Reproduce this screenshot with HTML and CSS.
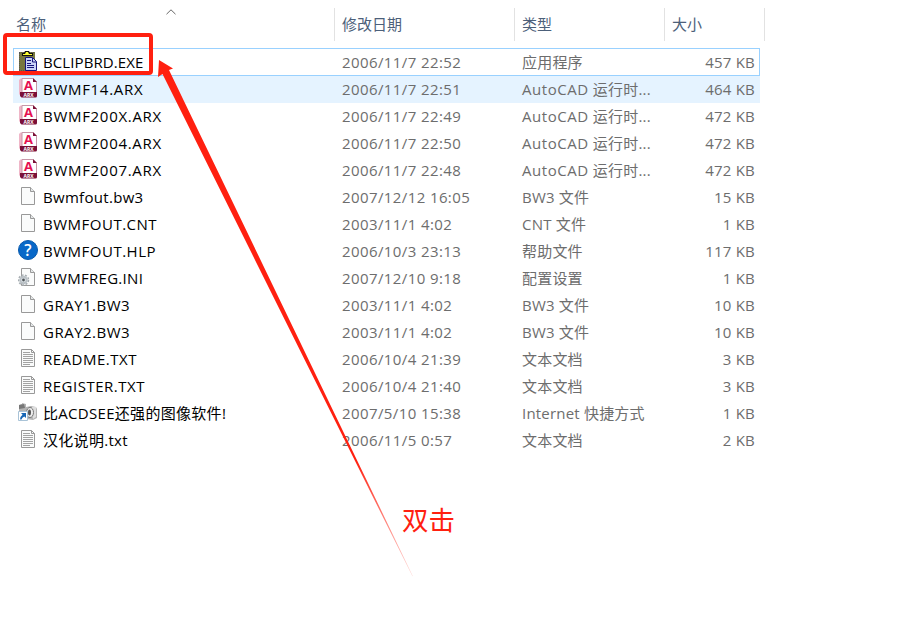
FILE: index.html
```html
<!DOCTYPE html>
<html lang="zh-CN">
<head>
    <meta charset="UTF-8">
    <meta name="viewport" content="width=device-width, initial-scale=1.0">
    <title>文件列表</title>
    <link rel="stylesheet" href="styles.css">
</head>
<body>
    <!-- file type icons -->
    <svg class="sprite">
        <symbol id="icon-clip" viewBox="0 0 20 20">
            <path fill="#77773f" d="M1 1h16v19H1z"/>
            <path fill="none" stroke="#555" stroke-dasharray="1 1" d="M1 1.500h16M1.500 2v17M1 19.500h7"/>
            <path fill="#111" d="M4 2h2l1-2h4l1 2h3v3H4z"/>
            <path fill="#ffff30" d="M5 3h2l1-2h2l1 2h3v1H5z"/>
            <path fill="#c9d3f7" stroke="#17177d" d="M7.500 6.500h7l4 4v9h-11z"/>
            <path fill="none" stroke="#17177d" d="M14.500 7v4h4M9 9.500h4M9 12.500h4M9 14.500h7M9 16.500h7"/>
        </symbol>
        <symbol id="icon-arx" viewBox="0 0 20 20">
            <path fill="#efb6c8" d="M2.500.5H5v18H3L1 16V2z"/>
            <path fill="#fff" stroke="#c796a8" d="M4 .5h11l3.500 3.500v13H4z"/>
            <path fill="#7b1038" d="M15 0l4 4h-4zM2 14h17v4q0 1.500-1.500 1.500H3.500L2 18z"/>
            <text class="arx-letter" x="10.500" y="11.500">A</text>
            <text class="arx-label" x="10.500" y="18.500">ARX</text>
        </symbol>
        <symbol id="icon-page" viewBox="0 0 20 20">
            <path fill="#fafbfb" stroke="#999" d="M3.500 1.500h9l4 4v13h-13z"/>
            <path fill="#e4e7e8" stroke="#999" d="M12.500 1.500v4h4"/>
        </symbol>
        <symbol id="icon-text" viewBox="0 0 20 20">
            <path fill="#fafbfb" stroke="#999" d="M3.500 1.500h10l3 3v14h-13z"/>
            <path fill="none" stroke="#999" d="M13.500 1.500v3h3"/>
            <path stroke="#a3a3a3" d="M5 4.500h7M5 6.500h10M5 8.500h10M5 10.500h10M5 12.500h10M5 14.500h10M5 16.500h7"/>
        </symbol>
        <symbol id="icon-help" viewBox="0 0 20 20">
            <circle cx="10" cy="10" r="9.500" fill="#0868c8" stroke="#0759ad"/>
            <text class="help-mark" x="10" y="15.500">?</text>
        </symbol>
        <symbol id="icon-ini" viewBox="0 0 20 20">
            <path fill="#fafbfb" stroke="#999" d="M3.500 1.500h9l4 4v13h-13z"/>
            <path fill="#e4e7e8" stroke="#999" d="M12.500 1.500v4h4"/>
            <circle cx="5.500" cy="13" r="5" fill="none" stroke="#a5acb1" stroke-width="1.500" stroke-dasharray="2 1.500"/>
            <circle cx="5.500" cy="13" r="3.300" fill="#dce2e6" stroke="#b9c0c5" stroke-width="2"/>
            <circle cx="5.500" cy="13" r="1.400" fill="#4f5559"/>
        </symbol>
        <symbol id="icon-camera" viewBox="0 0 20 20">
            <path fill="#b4b4b4" d="M1 3l3-1v-1l4 1v3l5-1 5 1 1 2v9l-4 2-14-2z"/>
            <path fill="#777" d="M1 3l5-1 1 4-6 1z"/>
            <path fill="#dedede" d="M14 5h4v10l-3 2z"/>
            <ellipse cx="12" cy="10.500" rx="3.500" ry="5" fill="#eee" stroke="#777"/>
            <ellipse cx="11.500" cy="10.500" rx="1.500" ry="3" fill="#555"/>
            <path fill="#fff" stroke="#a9c3d7" d="M.5 9.500h9v9h-9z"/>
            <path fill="#1766b5" d="M3 11h5v5l-1.700-1.500Q4 15.500 3.500 17.500H2Q2 14.500 4.600 12.700z"/>
        </symbol>
    </svg>

    <main class="explorer">
        <header class="row columns">
            <div class="name">名称</div>
            <div class="date">修改日期</div>
            <div class="type">类型</div>
            <div class="size">大小</div>
        </header>
        <section class="files">
            <div class="row focused"><div class="name"><svg><use href="#icon-clip"/></svg>BCLIPBRD.EXE</div><div class="date">2006/11/7 22:52</div><div class="type">应用程序</div><div class="size">457 KB</div></div>
            <div class="row hover"><div class="name arx"><svg><use href="#icon-arx"/></svg>BWMF14.ARX</div><div class="date">2006/11/7 22:51</div><div class="type"><span>AutoCAD</span> 运行时...</div><div class="size">464 KB</div></div>
            <div class="row"><div class="name arx"><svg><use href="#icon-arx"/></svg>BWMF200X.ARX</div><div class="date">2006/11/7 22:49</div><div class="type"><span>AutoCAD</span> 运行时...</div><div class="size">472 KB</div></div>
            <div class="row"><div class="name arx"><svg><use href="#icon-arx"/></svg>BWMF2004.ARX</div><div class="date">2006/11/7 22:50</div><div class="type"><span>AutoCAD</span> 运行时...</div><div class="size">472 KB</div></div>
            <div class="row"><div class="name arx"><svg><use href="#icon-arx"/></svg>BWMF2007.ARX</div><div class="date">2006/11/7 22:48</div><div class="type"><span>AutoCAD</span> 运行时...</div><div class="size">472 KB</div></div>
            <div class="row"><div class="name"><svg><use href="#icon-page"/></svg>Bwmfout.bw3</div><div class="date">2007/12/12 16:05</div><div class="type">BW3 文件</div><div class="size">15 KB</div></div>
            <div class="row"><div class="name wide"><svg><use href="#icon-page"/></svg>BWMFOUT.CNT</div><div class="date">2003/11/1 4:02</div><div class="type">CNT 文件</div><div class="size">1 KB</div></div>
            <div class="row"><div class="name wide"><svg><use href="#icon-help"/></svg>BWMFOUT.HLP</div><div class="date">2006/10/3 23:13</div><div class="type">帮助文件</div><div class="size">117 KB</div></div>
            <div class="row"><div class="name"><svg><use href="#icon-ini"/></svg>BWMFREG.INI</div><div class="date">2007/12/10 9:18</div><div class="type">配置设置</div><div class="size">1 KB</div></div>
            <div class="row"><div class="name wide"><svg><use href="#icon-page"/></svg>GRAY1.BW3</div><div class="date">2003/11/1 4:02</div><div class="type">BW3 文件</div><div class="size">10 KB</div></div>
            <div class="row"><div class="name wide"><svg><use href="#icon-page"/></svg>GRAY2.BW3</div><div class="date">2003/11/1 4:02</div><div class="type">BW3 文件</div><div class="size">10 KB</div></div>
            <div class="row"><div class="name wide"><svg><use href="#icon-text"/></svg>README.TXT</div><div class="date">2006/10/4 21:39</div><div class="type">文本文档</div><div class="size">3 KB</div></div>
            <div class="row"><div class="name wide"><svg><use href="#icon-text"/></svg>REGISTER.TXT</div><div class="date">2006/10/4 21:40</div><div class="type">文本文档</div><div class="size">3 KB</div></div>
            <div class="row"><div class="name"><svg><use href="#icon-camera"/></svg>比ACDSEE还强的图像软件!</div><div class="date">2007/5/10 15:38</div><div class="type">Internet 快捷方式</div><div class="size">1 KB</div></div>
            <div class="row"><div class="name"><svg><use href="#icon-text"/></svg>汉化说明.txt</div><div class="date">2006/11/5 0:57</div><div class="type">文本文档</div><div class="size">2 KB</div></div>
        </section>
    </main>

    <svg class="sort" viewBox="0 0 10 6"><path d="M.5 5.200L5 .8l4.500 4.400"/></svg>
    <div class="highlight"></div>
    <svg class="arrow" viewBox="0 0 910 634">
        <defs>
            <linearGradient id="fade" gradientUnits="userSpaceOnUse" x1="355" y1="460" x2="413" y2="577">
                <stop offset="0" stop-color="#ff2010"/>
                <stop offset="1" stop-color="#ff2010" stop-opacity=".15"/>
            </linearGradient>
        </defs>
        <path fill="url(#fade)" d="M159 60l14 8.500-4 1.500L412.800 576l-.4.200L162.500 74l-4.500 3z"/>
    </svg>
    <div class="note">双击</div>
</body>
</html>
```
FILE: styles.css
```css
body {
    margin: 0;
    width: 910px;
    height: 634px;
    overflow: hidden;
    background-color: #fff;
    font-family: "Open Sans", "Noto Sans CJK SC", sans-serif;
    font-size: 15px;
    color: #6d6d6d;
}
.sprite {
    display: none;
}
.explorer {
    width: 765px;
    padding-top: 8px;
}
.row {
    display: grid;
    grid-template-columns: 322px 180px 150px 95px;
    box-sizing: border-box;
    width: 747px;
    height: 27px;
    line-height: 26px;
    white-space: nowrap;
}
.columns {
    grid-template-columns: 335px 180px 150px 100px;
    width: 765px;
    height: 33px;
    line-height: 32px;
    color: #4c607a;
}
.columns div {
    box-sizing: border-box;
    border-right: 1px solid #e2e2e2;
    padding-left: 7px;
}
.columns .name {
    padding-left: 16px;
}
.files {
    padding: 7px 0 0 13px;
}
.files .name {
    display: flex;
    align-items: flex-start;
    color: #000;
    font-kerning: none;
    letter-spacing: 0.3px;
}
.files .wide {
    letter-spacing: 0.5px;
}
.files .arx {
    letter-spacing: 0.7px;
}
.files .name svg {
    width: 20px;
    height: 20px;
    margin: 2px 5px 0;
}
.files .date,
.files .type {
    padding-left: 7px;
}
.files .date {
    letter-spacing: 0.4px;
}
.files .type {
    letter-spacing: 0.2px;
}
.files .type span {
    letter-spacing: 0.55px;
}
.files .size {
    text-align: right;
    padding-right: 5px;
    letter-spacing: 0.2px;
}
.files .focused {
    height: 28px;
    line-height: 28px;
    outline: 1px solid #99d1ff;
    outline-offset: -1px;
}
.files .focused .name {
    letter-spacing: 0.1px;
}
.files .focused svg {
    margin-top: 3px;
}
.hover {
    background-color: #e5f3ff;
}
.arx-letter {
    font: bold 13px "Open Sans", sans-serif;
    letter-spacing: 0;
    fill: #e51050;
    text-anchor: middle;
}
.arx-label {
    font: bold 5px "Open Sans", sans-serif;
    letter-spacing: 0;
    fill: #fff;
    text-anchor: middle;
}
.help-mark {
    font: 600 16px "Open Sans", sans-serif;
    letter-spacing: 0;
    fill: #fff;
    text-anchor: middle;
}
.sort {
    position: absolute;
    left: 166px;
    top: 9px;
    width: 10px;
    height: 6px;
    fill: none;
    stroke: #666;
}
.highlight {
    position: absolute;
    left: 3px;
    top: 33px;
    box-sizing: border-box;
    width: 150px;
    height: 42px;
    border: 4px solid #ff2010;
    border-radius: 4px;
}
.arrow {
    position: absolute;
    left: 0;
    top: 0;
    width: 910px;
    height: 634px;
}
.note {
    position: absolute;
    left: 402px;
    top: 501px;
    font-size: 26.5px;
    line-height: 38px;
    color: #ff2010;
}
```
